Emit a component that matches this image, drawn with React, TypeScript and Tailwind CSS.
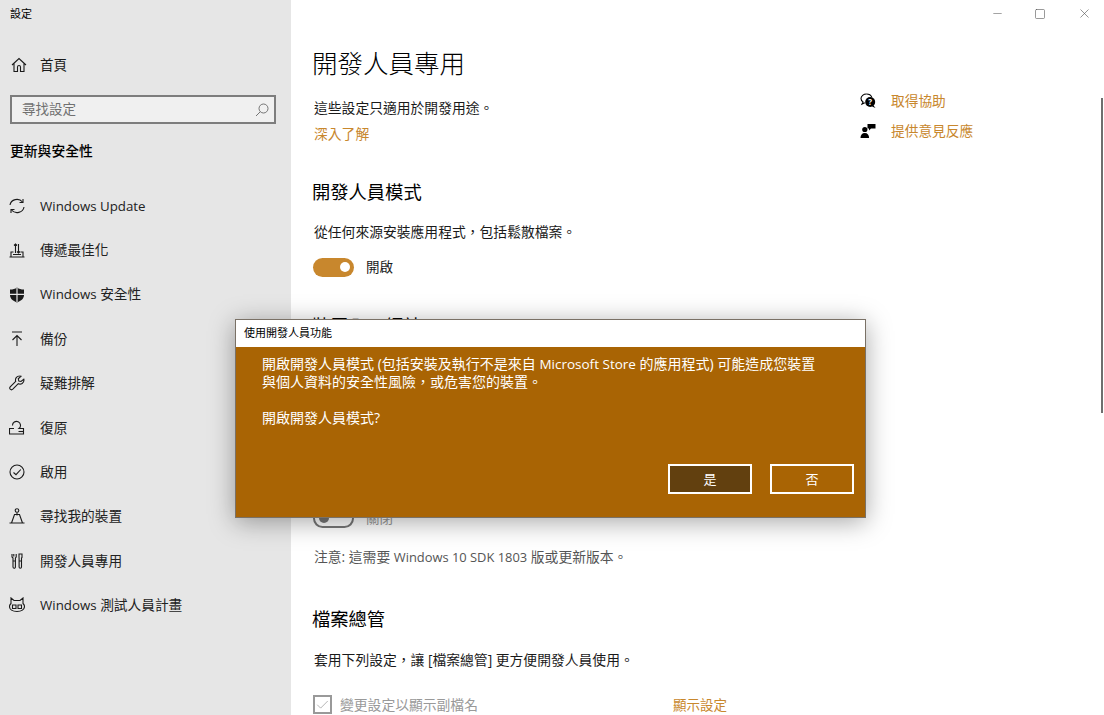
import React from "react";
import { Minus, Square, X, Check } from "lucide-react";

const font = "font-['Open_Sans','Noto_Sans_CJK_TC',sans-serif]";

const HomeIcon = () => (
  <svg width="16" height="16" viewBox="0 0 16 16" fill="none" stroke="currentColor" strokeWidth="1.1">
    <path d="M1 8l7-6.500L15 8M3 6.500V14.500h3.500V10a1.500 1.500 0 0 1 3 0v4.500H13V6.500" />
  </svg>
);

const UpdateIcon = () => (
  <svg width="16" height="16" viewBox="0 0 16 16" fill="none" stroke="currentColor" strokeWidth="1.1">
    <path d="M1 7a7 6.500 0 0 1 12.500-3M15 9a7 6.500 0 0 1-12.500 3" />
    <path d="M14 1v3.500h-3.500M2 15v-3.500h3.500" />
  </svg>
);

const ShieldIcon = () => (
  <svg width="16" height="16" viewBox="0 0 16 16" fill="currentColor">
    <path d="M8 0.500C6 2 4 2.600 1 2.600V8c0 3.400 2.600 5.800 7 7.500 4.400-1.700 7-4.100 7-7.500V2.600C12 2.600 10 2 8 0.500z" />
    <path d="M8 1v14M1 7.400h14" stroke="#e6e6e6" strokeWidth="1.200" />
  </svg>
);

const DeliveryIcon = () => (
  <svg width="16" height="16" viewBox="0 0 16 16" fill="none" stroke="currentColor" strokeWidth="1.100">
    <path d="M0.500 15h15M2 15v-5h2.500M14 15v-5h-2.500M4 12.500h8" />
    <path d="M6.500 11V2M5 3.500L6.500 2 8 3.500M9.500 2v9M8 9.500L9.500 11 11 9.500" />
  </svg>
);

const BackupIcon = () => (
  <svg width="16" height="16" viewBox="0 0 16 16" fill="none" stroke="currentColor" strokeWidth="1.100">
    <path d="M3 1h10M8 15V4.500M3.500 9L8 4.500 12.500 9" />
  </svg>
);

const WrenchIcon = () => (
  <svg width="16" height="16" viewBox="0 0 16 16" fill="none" stroke="currentColor" strokeWidth="1.100">
    <path d="M10.500 1a4 4 0 0 0-3.800 5.300L1.200 11.800a1.900 1.900 0 0 0 0 2.400 1.900 1.900 0 0 0 2.600 0l5.500-5.500A4 4 0 0 0 15 5l-.2-.8-2.800 2.300-2.200-.5-.5-2.200L12 1.200A4 4 0 0 0 10.500 1z" />
  </svg>
);

const RecoveryIcon = () => (
  <svg width="16" height="16" viewBox="0 0 16 16" fill="none" stroke="currentColor" strokeWidth="1.100">
    <path d="M3.500 5.500a4 4 0 1 1 6.500 3H14.500v5.500H0.500V8.500h4.500" />
    <path d="M9.500 11.500h5" />
  </svg>
);

const ActivateIcon = () => (
  <svg width="16" height="16" viewBox="0 0 16 16" fill="none" stroke="currentColor" strokeWidth="1.100">
    <circle cx="8" cy="8" r="7" />
    <path d="M4.500 8.500l2.500 2.200 4.800-5.200" />
  </svg>
);

const FindIcon = () => (
  <svg width="16" height="16" viewBox="0 0 16 16" fill="none" stroke="currentColor" strokeWidth="1.100">
    <circle cx="8" cy="2.500" r="1.800" />
    <path d="M0.500 15h15M2.500 15l3-8.500h5l3 8.500M8 4.500v3" />
  </svg>
);

const DevIcon = () => (
  <svg width="16" height="16" viewBox="0 0 16 16" fill="none" stroke="currentColor" strokeWidth="1.100">
    <path d="M3 1v3l1 1v9a1.200 1.200 0 0 0 2.400 0V5l.8-1V1M4.800 1v2.500M10 1h3v3.500l-.5.500v9a1.200 1.200 0 0 1-2.400 0V5L10 4.500z" />
    <path d="M4 8h2.400M10.100 8h2.400" />
  </svg>
);

const CatIcon = () => (
  <svg width="16" height="16" viewBox="0 0 16 16" fill="none" stroke="currentColor" strokeWidth="1.100">
    <path d="M2 1l3 2.500h6L14 1v5.500c1 .8 1.500 1.800 1.500 3 0 3-3 5-7.500 5s-7.500-2-7.500-5c0-1.200.5-2.200 1.500-3z" />
    <path d="M3.500 8h3.500v3.500H3.500zM9 8h3.500v3.500H9z" />
  </svg>
);

const latin = "text-[13.300px]";

const nav: { label: React.ReactNode; icon: React.ReactNode }[] = [
  { label: <span className={latin}>Windows Update</span>, icon: <UpdateIcon /> },
  { label: "傳遞最佳化", icon: <DeliveryIcon /> },
  { label: <><span className={latin}>Windows</span> 安全性</>, icon: <ShieldIcon /> },
  { label: "備份", icon: <BackupIcon /> },
  { label: "疑難排解", icon: <WrenchIcon /> },
  { label: "復原", icon: <RecoveryIcon /> },
  { label: "啟用", icon: <ActivateIcon /> },
  { label: "尋找我的裝置", icon: <FindIcon /> },
  { label: "開發人員專用", icon: <DevIcon /> },
  { label: <><span className={latin}>Windows</span> 測試人員計畫</>, icon: <CatIcon /> },
];

const HelpIcon = () => (
  <svg width="16" height="16" viewBox="0 0 16 16">
    <path d="M6.500 1C3.500 1 1 3 1 5.500c0 1.400.8 2.600 2 3.400L2 11l2.800-1.300" fill="none" stroke="#000" strokeWidth="1.100" />
    <path d="M6.500 1c2.500 0 4.500 1.200 5.200 3" fill="none" stroke="#000" strokeWidth="1.100" />
    <circle cx="10.200" cy="9" r="5" fill="#000" />
    <path d="M13.500 12.500l2 2.500-3.500-1.500z" fill="#000" />
    <text x="10.200" y="12" fontSize="8" fontWeight="700" fill="#fff" textAnchor="middle">?</text>
  </svg>
);

const FeedbackIcon = () => (
  <svg width="16" height="16" viewBox="0 0 16 16" fill="#000">
    <circle cx="4.800" cy="6.500" r="2.600" />
    <path d="M0.500 15c0-3 1.500-5 4.300-5s4.300 2 4.300 5z" />
    <path d="M7.500 1h8v4.500h-4.500l-2 2v-2h-1.500z" />
  </svg>
);

export default function App() {
  return (
    <div lang="zh-TW" className={`${font} relative flex h-[715px] w-[1104px] overflow-hidden bg-white text-[#1a1a1a]`}>
      <aside className="flex w-[291px] shrink-0 flex-col bg-[#e6e6e6]">
        <div className="pl-[10px] pt-[6px] text-[11px] leading-[16px] text-black">設定</div>
        <div className="mt-[33px] flex h-[20px] items-center pl-[11px]">
          <HomeIcon />
          <span className="ml-[13px] text-[13.500px]">首頁</span>
        </div>
        <div className="ml-[10px] mt-[20px] flex h-[29px] w-[266px] items-center justify-between border-2 border-[#7d7d7d] bg-[#f0f0f0] pl-[10px] pr-[5px]">
          <span className="text-[13.500px] text-[#707070]">尋找設定</span>
          <svg width="14" height="14" viewBox="0 0 14 14" fill="none" stroke="#666" strokeWidth="0.900">
            <circle cx="8.500" cy="5.500" r="4.500" />
            <path d="M5.200 8.800L1 13" />
          </svg>
        </div>
        <div className="ml-[10px] mt-[15px] text-[13.800px] font-medium leading-[24px] text-black">更新與安全性</div>
        <nav className="mt-[21px] flex flex-col">
          {nav.map((item, i) => (
            <div key={i} className="flex h-[44.330px] items-center pl-[9px]">
              <span className="flex w-[31px] shrink-0 justify-start">{item.icon}</span>
              <span className="text-[13.700px] text-[#222]">{item.label}</span>
            </div>
          ))}
        </nav>
      </aside>

      <main className="relative flex-1 pl-[21px]">
        <div className="flex h-[27px] items-center justify-end text-[#555]">
          <Minus size={13} strokeWidth={1} className="mr-[30px]" />
          <Square size={12} strokeWidth={1.200} className="mr-[31px]" />
          <X size={15} strokeWidth={1} className="mr-[12px]" />
        </div>
        <div className="flex">
          <div className="w-[527px]">
            <h1 className="mt-[18px] text-[25.500px] font-light leading-[36px] text-black">開發人員專用</h1>
            <p className="ml-[2px] mt-[17px] text-[13.800px] leading-[20px]">這些設定只適用於開發用途。</p>
            <p className="ml-[2px] mt-[6px] text-[13.800px] leading-[20px] text-[#c8872d]">深入了解</p>
            <h2 className="mt-[35px] text-[18.300px] leading-[26px] text-black">開發人員模式</h2>
            <p className="ml-[2px] mt-[17px] text-[13.800px] leading-[20px]">從任何來源安裝應用程式，包括鬆散檔案。</p>
            <div className="ml-[1px] mt-[15px] flex items-center">
              <div className="flex h-[19px] w-[41px] items-center justify-end rounded-full bg-[#c8872d] pr-[4px]">
                <div className="h-[10px] w-[10px] rounded-full bg-white" />
              </div>
              <span className="ml-[12px] text-[13.500px]">開啟</span>
            </div>
            <h2 className="mt-[36px] text-[18.300px] leading-[26px] text-black">裝置入口網站</h2>
            <div className="ml-[1px] mt-[169px] flex items-center">
              <div className="flex h-[19px] w-[41px] items-center rounded-full border-2 border-[#777] pl-[4px]">
                <div className="h-[10px] w-[10px] rounded-full bg-[#777]" />
              </div>
              <span className="ml-[12px] text-[13.500px] text-[#999]">關閉</span>
            </div>
            <p className="ml-[2px] mt-[18px] text-[13.800px] leading-[20px] text-[#555]">注意: 這需要 <span className="text-[12.900px]">Windows 10 SDK 1803</span> 版或更新版本。</p>
            <h2 className="mt-[39px] text-[18.300px] leading-[26px] text-black">檔案總管</h2>
            <p className="ml-[2px] mt-[18px] text-[13.800px] leading-[20px]">套用下列設定，讓 [檔案總管] 更方便開發人員使用。</p>
            <div className="ml-[1px] mt-[25px] flex w-[414px] items-center justify-between">
              <div className="flex items-center">
                <div className="flex h-[19px] w-[19px] items-center justify-center border-2 border-[#999]">
                  <Check size={18} strokeWidth={1} className="text-[#888]" />
                </div>
                <span className="ml-[8px] text-[13.800px] text-[#999]">變更設定以顯示副檔名</span>
              </div>
              <span className="text-[13.500px] text-[#c8872d]">顯示設定</span>
            </div>
          </div>
          <div className="ml-[21px] mt-[64px] flex flex-col gap-[10px]">
            <div className="flex h-[20px] items-center">
              <HelpIcon />
              <span className="ml-[15px] text-[13.700px] text-[#c8872d]">取得協助</span>
            </div>
            <div className="flex h-[20px] items-center">
              <FeedbackIcon />
              <span className="ml-[15px] text-[13.700px] text-[#c8872d]">提供意見反應</span>
            </div>
          </div>
        </div>
        <div className="absolute right-[1px] top-[98px] h-[315px] w-[2px] bg-[#6e6e6e]" />
      </main>

      <div className="absolute left-[235px] top-[319px] flex h-[199px] w-[631px] flex-col border border-[#7a7166] shadow-[0_4px_24px_rgba(0,0,0,0.35)]">
        <div className="flex h-[27px] items-center bg-white pl-[8px] text-[11px] text-black">使用開發人員功能</div>
        <div className="relative flex-1 bg-[#a96404] pl-[26px] pt-[8px] text-[14px] leading-[18px] text-white">
          <p>開啟開發人員模式 (包括安裝及執行不是來自 <span className="text-[13.500px]">Microsoft Store</span> 的應用程式) 可能造成您裝置</p>
          <p>與個人資料的安全性風險，或危害您的裝置。</p>
          <p className="mt-[18px]">開啟開發人員模式?</p>
          <div className="absolute bottom-[23px] right-[11px] flex gap-[18px]">
            <button className="h-[30px] w-[84px] border-2 border-white bg-[#62400f] text-[13px] text-white">是</button>
            <button className="h-[30px] w-[84px] border-2 border-white text-[13px] text-white">否</button>
          </div>
        </div>
      </div>
    </div>
  );
}
